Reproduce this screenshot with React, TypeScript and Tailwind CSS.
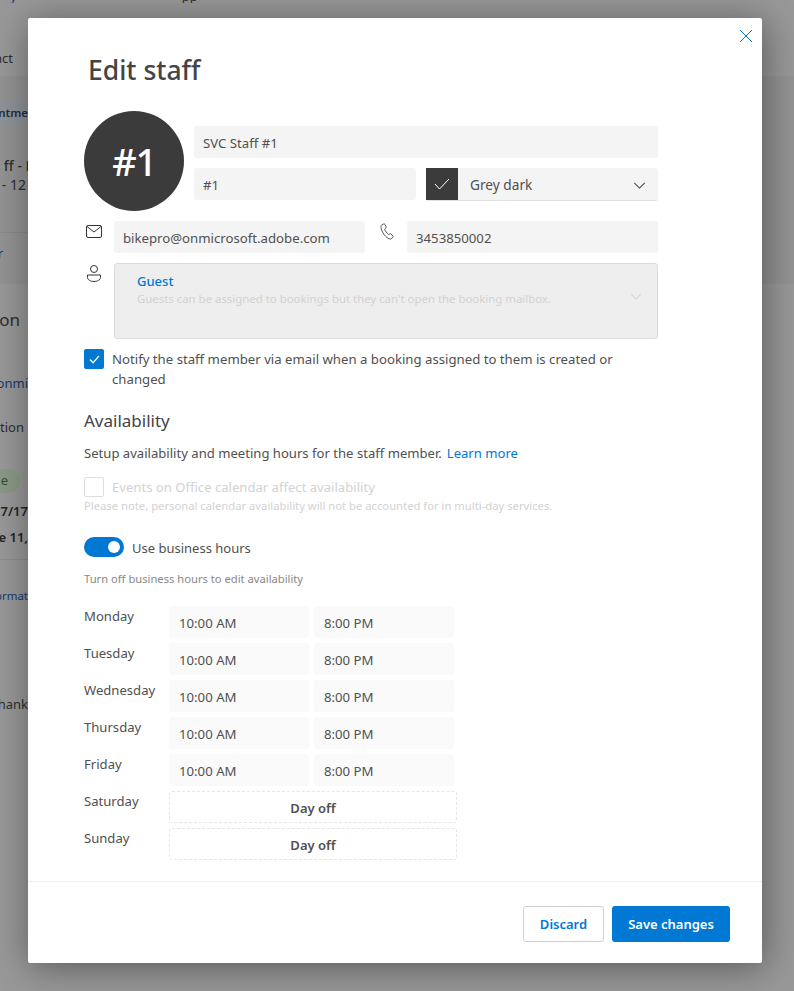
import { ReactNode } from "react";

const weekdays = ["Monday", "Tuesday", "Wednesday", "Thursday", "Friday"];
const weekend = ["Saturday", "Sunday"];

function Field({ children, className = "" }: { children: ReactNode; className?: string }) {
  return (
    <div className={`flex h-8 items-center rounded-[3px] bg-[#f4f4f4] px-[9px] pt-[4px] text-[13.2px] text-[#505050] ${className}`}>
      {children}
    </div>
  );
}

function Chevron({ className = "" }: { className?: string }) {
  return (
    <svg viewBox="0 0 14 8" className={className} fill="none" stroke="currentColor" strokeWidth="1.2">
      <path d="M1 1l6 6 6-6" />
    </svg>
  );
}

// one clipped bit of text from the page behind the dialog
function Peek({ children, className = "" }: { children: ReactNode; className?: string }) {
  return <div className={`flex w-[28px] justify-end whitespace-nowrap ${className}`}>{children}</div>;
}

function BehindPage() {
  return (
    <div className="text-[13px] text-[#2e2e2e]">
      <div className="h-[76px]">
        <div className="flex h-[3px] overflow-hidden text-[13px] leading-[16px]">
          <span className="-mt-[12px] ml-[10px] text-[#123a72]">y</span>
          <span className="-mt-[12px] ml-[165px]">pp</span>
        </div>
        <Peek className="mt-[44px] h-[24px] items-center pr-[15px]">act</Peek>
      </div>

      <div className="h-[208px] bg-[#939393] pt-[24px]">
        <Peek className="h-[25px] items-center bg-[#8f9499] text-[11.5px] font-semibold text-[#1c2c4c]">ntme</Peek>
        <Peek className="mt-[31px] h-[19px] items-center text-[14px] font-medium">
          <span className="-mr-[5px]">ff - F</span>
        </Peek>
        <Peek className="h-[19px] items-center pr-[2px] text-[14px]">- 12</Peek>
        <div className="mt-[38px] w-[28px] border-t border-[#8a8a8a]">
          <Peek className="mt-[9px] h-[24px] items-center pr-[25px] text-[#0b3f78]">r</Peek>
        </div>
      </div>

      <Peek className="mt-[24px] h-[24px] items-center pr-[8px] text-[17px]">ion</Peek>
      <Peek className="mt-[40px] h-[24px] items-center text-[#123a72]">onmi</Peek>
      <Peek className="mt-[20px] h-[24px] items-center pr-[4px]">tion</Peek>
      <div className="mt-[29px] flex h-[24px] w-[20px] items-center justify-end rounded-r-full bg-[#8a9a85] pr-[12px] text-[#35502c]">e</div>
      <Peek className="mt-[9px] h-[19px] items-center font-semibold text-[#232323]">7/17</Peek>
      <Peek className="mt-[7px] h-[19px] items-center font-semibold text-[#232323]">ue 11,</Peek>
      <div className="mt-[12px] w-[28px] border-t border-[#8e8e8e]">
        <Peek className="mt-[24px] h-[24px] items-center text-[11.5px] text-[#123a72]">ormat</Peek>
      </div>
      <Peek className="mt-[85px] h-[24px] items-center">Thank</Peek>
    </div>
  );
}

export default function App() {
  return (
    <div
      className="relative h-[991px] w-[794px] overflow-hidden bg-[#989898] text-[13px] text-[#444]"
      style={{ fontFamily: '"Noto Sans", "Open Sans", sans-serif' }}
    >
      <BehindPage />

      <div className="absolute top-[18px] left-[28px] h-[945px] w-[734px] rounded-[2px] bg-white shadow-[2px_4px_36px_rgba(0,0,0,0.42)]">
        <button className="absolute top-[11px] right-[9px] text-[#0078d4]">
          <svg viewBox="0 0 14 14" className="h-[14px] w-[14px]" fill="none" stroke="currentColor" strokeWidth="1">
            <path d="M1 1l12 12M13 1L1 13" />
          </svg>
        </button>

        <div className="pt-[33px] pl-[56px]">
          <h1 className="ml-1 text-[26.5px] leading-[38px] font-medium text-[#444]">Edit staff</h1>

          <div className="mt-[22px] flex w-[574px] gap-[10px]">
            <div className="flex h-[100px] w-[100px] items-center justify-center rounded-full bg-[#3b3b3b] text-[38px] font-medium tracking-[-1.5px] text-white">
              #1
            </div>
            <div className="flex flex-1 flex-col gap-[10px] pt-[15px]">
              <Field>SVC Staff #1</Field>
              <div className="flex gap-[10px]">
                <Field className="w-[222px]">#1</Field>
                <div className="flex h-[33px] flex-1 items-center rounded-[3px] border-b border-[#e2e2e2] bg-[#f4f4f4] text-[13.7px] text-[#505050]">
                  <div className="flex h-8 w-8 items-center justify-center bg-[#3b3b3b] text-white">
                    <svg viewBox="0 0 16 12" className="h-[12px] w-[16px]" fill="none" stroke="currentColor" strokeWidth="1">
                      <path d="M1 6l4.5 5L15 1" />
                    </svg>
                  </div>
                  <span className="ml-3 pt-[3px]">Grey dark</span>
                  <Chevron className="mt-[3px] mr-[12px] ml-auto h-[7px] w-[13px] text-[#444]" />
                </div>
              </div>
            </div>
          </div>

          <div className="mt-[10px] flex w-[574px]">
            <svg viewBox="0 0 16 13" className="mt-[4px] ml-[2px] h-[13px] w-[16px]" fill="none" stroke="#333" strokeWidth="1">
              <rect x="0.5" y="0.5" width="15" height="12" rx="1.5" />
              <path d="M1 1.5l7 5.5 7-5.5" />
            </svg>
            <Field className="ml-[12px] w-[251px]">bikepro@onmicrosoft.adobe.com</Field>
            <svg viewBox="0 0 14 17" className="mt-[2px] ml-[15px] h-[17px] w-[14px]" fill="none" stroke="#555" strokeWidth="1">
              <path d="M3.5 1L1.5 2.2C0.8 2.8 0.8 4 1.2 5.5 2 9 4.5 13 8 15.3c1.2.8 2.5.9 3.4.3l1.4-1.1c.4-.4.4-.9.1-1.3l-1.8-2.2c-.3-.4-.8-.5-1.2-.2l-1.2.8C7 10.5 5 7.5 4.600 6.100l1.200-1c.4-.3.4-.8.3-1.2L5 1.4C4.700.9 4 .8 3.5 1z" />
            </svg>
            <Field className="ml-[13px] flex-1">3453850002</Field>
          </div>

          <div className="mt-[10px] flex w-[574px]">
            <svg viewBox="0 0 16 17" className="mt-[2px] ml-[2px] h-[17px] w-[16px]" fill="none" stroke="#333" strokeWidth="1">
              <circle cx="8" cy="4" r="3.5" />
              <path d="M1.5 10h13v2.5c0 2.2-3 4-6.500 4s-6.500-1.800-6.500-4z" />
            </svg>
            <div className="ml-[12px] flex h-[76px] flex-1 justify-between rounded-[3px] border border-[#dcdcdc] bg-[#eeeeee] pt-[8px] pr-[15px] pl-[22px]">
              <div>
                <div className="text-[13px] leading-[18px] font-medium text-[#0078d4]">Guest</div>
                <div className="text-[11.4px] leading-[18px] text-[#d2d2d2]">
                  Guests can be assigned to bookings but they can't open the booking mailbox.
                </div>
              </div>
              <Chevron className="mt-[21px] h-[7px] w-[12px] text-[#d6d6d6]" />
            </div>
          </div>

          <div className="mt-[10px] flex w-[574px] gap-[8px]">
            <div className="flex h-5 w-5 shrink-0 items-center justify-center rounded-[2px] bg-[#0078d4] text-white">
              <svg viewBox="0 0 12 10" className="h-[9px] w-[11px]" fill="none" stroke="currentColor" strokeWidth="1.500">
                <path d="M1 5l3.500 3.500L11 1" />
              </svg>
            </div>
            <p className="text-[13.2px] leading-[20px] text-[#505050]">
              Notify the staff member via email when a booking assigned to them is created or changed
            </p>
          </div>

          <h2 className="mt-[20px] text-[17px] leading-[24px] text-[#444]">Availability</h2>
          <p className="mt-[11px] text-[13.1px] leading-[18px] text-[#505050]">
            Setup availability and meeting hours for the staff member.
            <span className="ml-[5px] text-[#0078d4]">Learn more</span>
          </p>

          <div className="mt-[14px] flex items-center gap-[8px]">
            <div className="h-5 w-5 rounded-[2px] border border-[#dedede]" />
            <span className="pt-[2px] text-[13.1px] text-[#d2d2d2]">Events on Office calendar affect availability</span>
          </div>
          <p className="text-[11.25px] leading-[16px] text-[#d2d2d2]">
            Please note, personal calendar availability will not be accounted for in multi-day services.
          </p>

          <div className="mt-[23px] flex items-center gap-[8px]">
            <div className="flex h-5 w-10 items-center justify-end rounded-full bg-[#0078d4] pr-[4px]">
              <div className="h-3 w-3 rounded-full bg-white" />
            </div>
            <span className="pt-[2px] text-[#505050]">Use business hours</span>
          </div>
          <p className="mt-[13px] text-[11.2px] leading-[16px] text-[#888]">Turn off business hours to edit availability</p>

          <div className="mt-[19px] flex flex-col gap-[5px]">
            {weekdays.map((day) => (
              <div key={day} className="flex">
                <div className="w-[85px] text-[13.1px] leading-[20px] text-[#505050]">{day}</div>
                <div className="flex gap-[5px] text-[13.2px] text-[#505050]">
                  <div className="flex h-8 w-[140px] items-center rounded-[3px] bg-[#fafafa] px-[10px] pt-[3px]">10:00 AM</div>
                  <div className="flex h-8 w-[140px] items-center rounded-[3px] bg-[#fafafa] px-[10px] pt-[3px]">8:00 PM</div>
                </div>
              </div>
            ))}
            {weekend.map((day) => (
              <div key={day} className="flex">
                <div className="w-[85px] text-[13.1px] leading-[20px] text-[#505050]">{day}</div>
                <div className="flex h-8 w-[288px] items-center justify-center rounded-[3px] border border-dashed border-[#e6e6e6] pt-[3px] font-semibold text-[#505050]">
                  Day off
                </div>
              </div>
            ))}
          </div>
        </div>

        <div className="mt-[21px] flex justify-end gap-[8px] border-t border-[#eeeeee] pt-[24px] pr-[32px]">
          <button className="h-[36px] w-[81px] rounded-[3px] border border-[#cfcfcf] bg-white pt-[2px] font-semibold text-[#0078d4]">Discard</button>
          <button className="h-[36px] w-[118px] rounded-[3px] bg-[#0078d4] pt-[2px] font-semibold text-white">Save changes</button>
        </div>
      </div>
    </div>
  );
}
